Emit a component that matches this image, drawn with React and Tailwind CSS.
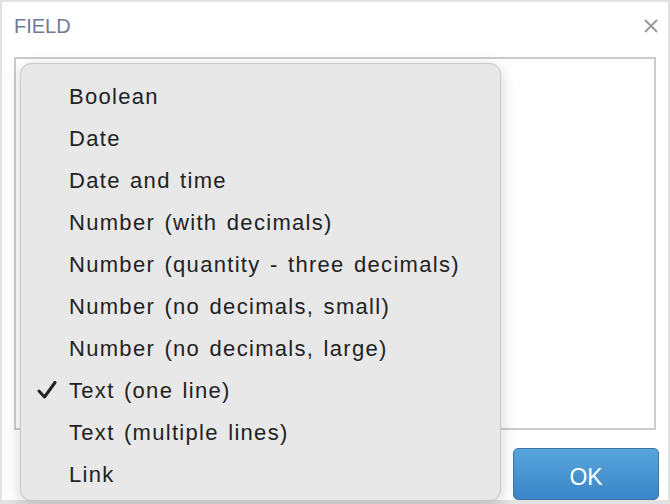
import React from 'react';

const options = [
  'Boolean',
  'Date',
  'Date and time',
  'Number (with decimals)',
  'Number (quantity - three decimals)',
  'Number (no decimals, small)',
  'Number (no decimals, large)',
  'Text (one line)',
  'Text (multiple lines)',
  'Link',
];

const selected = 'Text (one line)';

function App() {
  return (
    <div
      className="relative w-[670px] h-[504px] overflow-hidden bg-[#e2e2e2] pl-[2px] pt-[2px]"
      style={{ fontFamily: '"Liberation Sans", Arial, sans-serif' }}
    >
      {/* Dialog */}
      <div className="w-[666px] h-[498px] bg-white flex flex-col px-3">
        <div className="flex items-center justify-between h-[46px] pt-[2px]">
          <span className="text-[20px] text-[#717a94]">FIELD</span>
          <svg width="16" height="16" viewBox="0 0 16 16" className="mr-[-3px]">
            <path d="M2 2 L14 14 M14 2 L2 14" stroke="#9a9a9a" strokeWidth="2" />
          </svg>
        </div>
        <div className="mt-[10px] h-[378px] border-2 border-[#cbccd2] bg-white" />
        <div className="flex justify-end mt-[18px] mr-[-3px]">
          <button className="w-[146px] h-[52px] rounded-[5px] border border-[#3d74a8] bg-gradient-to-b from-[#58a5dd] to-[#3a86c7] text-white text-[23px] flex items-start justify-center pt-[11px]">
            OK
          </button>
        </div>
      </div>

      {/* Dropdown menu */}
      <div className="absolute left-[20px] top-[63px] w-[481px] h-[438px] rounded-[11px] border border-[#c9c9c9] bg-[#e8e8e8] shadow-[0_4px_16px_rgba(0,0,0,0.18)] pt-[11px]">
        {options.map((opt) => (
          <div key={opt} className="flex items-center h-[42px] text-[22px] tracking-[1.3px] [word-spacing:2px] text-[#222]">
            <span className="w-[48px] flex justify-end pr-[12px]">
              {opt === selected && (
                <svg width="20" height="18" viewBox="0 0 20 18">
                  <path d="M2 10 L7.5 16 L18 1.5" fill="none" stroke="#222" strokeWidth="3" strokeLinecap="round" strokeLinejoin="round" />
                </svg>
              )}
            </span>
            <span>{opt}</span>
          </div>
        ))}
      </div>
    </div>
  );
}

export default App;
